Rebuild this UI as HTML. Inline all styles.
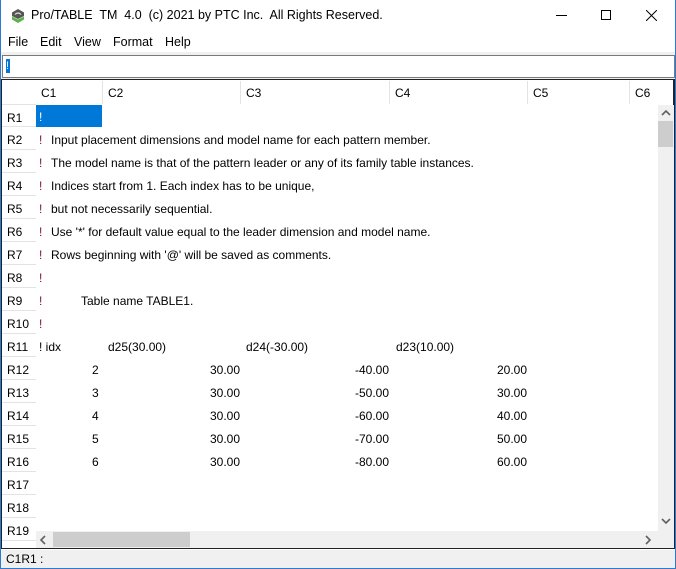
<!DOCTYPE html>
<html><head><meta charset="utf-8"><style>
*{margin:0;padding:0;box-sizing:border-box}
body{width:676px;height:569px;overflow:hidden;background:#fff;font-family:"Liberation Sans",sans-serif;font-size:12px;color:#000;position:relative}
.a{position:absolute;white-space:nowrap}
.ex{color:#7a1030}
.rh{position:absolute;left:2px;width:34px;height:23px;border-bottom:1px solid #e3e3e3;padding:6px 0 0 5px}
.r{position:absolute;right:0;text-align:right}
</style></head><body>
<div class="a" style="left:0;top:0;width:676px;height:569px;border:1px solid #2b7bd3;border-top:none"></div>
<!-- title -->
<svg class="a" style="left:10px;top:8px" width="16" height="16" viewBox="0 0 16 16"><path d="M8 1L14 4.5V8L8 11 2 8V4.5z" fill="#555"/><path d="M2 8.5L8 11.5 14 8.5V11.5L8 15 2 11.5z" fill="#5bb24a"/><path d="M5 6.5Q8 3.5 11 6.5" stroke="#ddd" stroke-width="1.2" fill="none"/></svg>
<div class="a" style="left:31px;top:8px;font-size:12.5px">Pro/TABLE&nbsp; TM&nbsp; 4.0&nbsp; (c) 2021 by PTC Inc.&nbsp; All Rights Reserved.</div>
<div class="a" style="left:556px;top:15px;width:11px;height:1px;background:#000"></div>
<div class="a" style="left:601px;top:10px;width:10px;height:10px;border:1px solid #000"></div>
<svg class="a" style="left:646px;top:10px" width="11" height="11"><path d="M0 0L11 11M11 0L0 11" stroke="#000" stroke-width="1"/></svg>
<!-- menu -->
<div class="a" style="left:8px;top:35px;font-size:12.5px">File</div>
<div class="a" style="left:40px;top:35px;font-size:12.5px">Edit</div>
<div class="a" style="left:74px;top:35px;font-size:12.5px">View</div>
<div class="a" style="left:113px;top:35px;font-size:12.5px">Format</div>
<div class="a" style="left:165px;top:35px;font-size:12.5px">Help</div>
<!-- edit -->
<div class="a" style="left:1px;top:52px;width:674px;height:27px;background:#f0f0f0"></div>
<div class="a" style="left:2px;top:55px;width:673px;height:23px;border:1px solid #7a7a7a;background:#fff"></div>
<div class="a" style="left:6px;top:59px;width:4px;height:14px;background:#0078d7;color:#fff;font-size:11px;line-height:14px">!</div>
<!-- grid -->
<div class="a" style="left:1px;top:79px;width:674px;height:470px;border:1px solid #222;border-right:2px solid #222"></div>
<div class="a" style="left:102px;top:81px;width:1px;height:23px;background:#e3e3e3"></div>
<div class="a" style="left:240px;top:81px;width:1px;height:23px;background:#e3e3e3"></div>
<div class="a" style="left:389px;top:81px;width:1px;height:23px;background:#e3e3e3"></div>
<div class="a" style="left:527px;top:81px;width:1px;height:23px;background:#e3e3e3"></div>
<div class="a" style="left:629px;top:81px;width:1px;height:23px;background:#e3e3e3"></div>
<div class="a" style="left:41px;top:86px">C1</div>
<div class="a" style="left:108px;top:86px">C2</div>
<div class="a" style="left:246px;top:86px">C3</div>
<div class="a" style="left:395px;top:86px">C4</div>
<div class="a" style="left:533px;top:86px">C5</div>
<div class="a" style="left:635px;top:86px">C6</div>
<div class="rh" style="top:104px;border-top:1px solid #e3e3e3">R1</div>
<div class="rh" style="top:127px">R2</div>
<div class="rh" style="top:150px">R3</div>
<div class="rh" style="top:173px">R4</div>
<div class="rh" style="top:196px">R5</div>
<div class="rh" style="top:219px">R6</div>
<div class="rh" style="top:242px">R7</div>
<div class="rh" style="top:265px">R8</div>
<div class="rh" style="top:288px">R9</div>
<div class="rh" style="top:311px">R10</div>
<div class="rh" style="top:334px">R11</div>
<div class="rh" style="top:357px">R12</div>
<div class="rh" style="top:380px">R13</div>
<div class="rh" style="top:403px">R14</div>
<div class="rh" style="top:426px">R15</div>
<div class="rh" style="top:449px">R16</div>
<div class="rh" style="top:472px">R17</div>
<div class="rh" style="top:495px">R18</div>
<div class="rh" style="top:518px">R19</div>
<div class="a" style="left:36px;top:105px;width:66px;height:22px;background:#0078d7;color:#fff;padding:5px 0 0 3px">!</div>
<div class="a ex" style="left:39px;top:133px">!</div><div class="a" style="left:51px;top:133px">Input placement dimensions and model name for each pattern member.</div>
<div class="a ex" style="left:39px;top:156px">!</div><div class="a" style="left:51px;top:156px">The model name is that of the pattern leader or any of its family table instances.</div>
<div class="a ex" style="left:39px;top:179px">!</div><div class="a" style="left:51px;top:179px">Indices start from 1. Each index has to be unique,</div>
<div class="a ex" style="left:39px;top:202px">!</div><div class="a" style="left:51px;top:202px">but not necessarily sequential.</div>
<div class="a ex" style="left:39px;top:225px">!</div><div class="a" style="left:51px;top:225px">Use '*' for default value equal to the leader dimension and model name.</div>
<div class="a ex" style="left:39px;top:248px">!</div><div class="a" style="left:51px;top:248px">Rows beginning with '@' will be saved as comments.</div>
<div class="a ex" style="left:39px;top:271px">!</div>
<div class="a ex" style="left:39px;top:294px">!</div><div class="a" style="left:81px;top:294px">Table name TABLE1.</div>
<div class="a ex" style="left:39px;top:317px">!</div>
<div class="a" style="left:39px;top:340px">! idx</div>
<div class="a" style="left:108px;top:340px">d25(30.00)</div>
<div class="a" style="left:246px;top:340px">d24(-30.00)</div>
<div class="a" style="left:396px;top:340px">d23(10.00)</div>
<div class="a" style="left:92px;top:363px">2</div><div class="a" style="left:210px;top:363px">30.00</div><div class="a" style="left:355px;top:363px">-40.00</div><div class="a" style="left:497px;top:363px">20.00</div>
<div class="a" style="left:92px;top:386px">3</div><div class="a" style="left:210px;top:386px">30.00</div><div class="a" style="left:355px;top:386px">-50.00</div><div class="a" style="left:497px;top:386px">30.00</div>
<div class="a" style="left:92px;top:409px">4</div><div class="a" style="left:210px;top:409px">30.00</div><div class="a" style="left:355px;top:409px">-60.00</div><div class="a" style="left:497px;top:409px">40.00</div>
<div class="a" style="left:92px;top:432px">5</div><div class="a" style="left:210px;top:432px">30.00</div><div class="a" style="left:355px;top:432px">-70.00</div><div class="a" style="left:497px;top:432px">50.00</div>
<div class="a" style="left:92px;top:455px">6</div><div class="a" style="left:210px;top:455px">30.00</div><div class="a" style="left:355px;top:455px">-80.00</div><div class="a" style="left:497px;top:455px">60.00</div>
<!-- scrollbars -->
<div class="a" style="left:658px;top:105px;width:16px;height:426px;background:#f0f0f0"></div>
<div class="a" style="left:658px;top:121px;width:15px;height:26px;background:#cdcdcd"></div>
<svg class="a" style="left:661px;top:110px" width="10" height="7"><path d="M1 5L5 1 9 5" stroke="#606060" stroke-width="1.6" fill="none"/></svg>
<svg class="a" style="left:661px;top:518px" width="10" height="7"><path d="M1 1L5 5 9 1" stroke="#606060" stroke-width="1.6" fill="none"/></svg>
<div class="a" style="left:36px;top:531px;width:638px;height:17px;background:#f0f0f0"></div>
<div class="a" style="left:53px;top:532px;width:137px;height:15px;background:#cdcdcd"></div>
<svg class="a" style="left:40px;top:535px" width="7" height="10"><path d="M5 1L1 5 5 9" stroke="#606060" stroke-width="1.6" fill="none"/></svg>
<svg class="a" style="left:645px;top:535px" width="7" height="10"><path d="M1 1L5 5 1 9" stroke="#606060" stroke-width="1.6" fill="none"/></svg>
<!-- status -->
<div class="a" style="left:1px;top:550px;width:674px;height:18px;background:#f0f0f0"></div>
<div class="a" style="left:6px;top:552px">C1R1 :</div>
</body></html>
